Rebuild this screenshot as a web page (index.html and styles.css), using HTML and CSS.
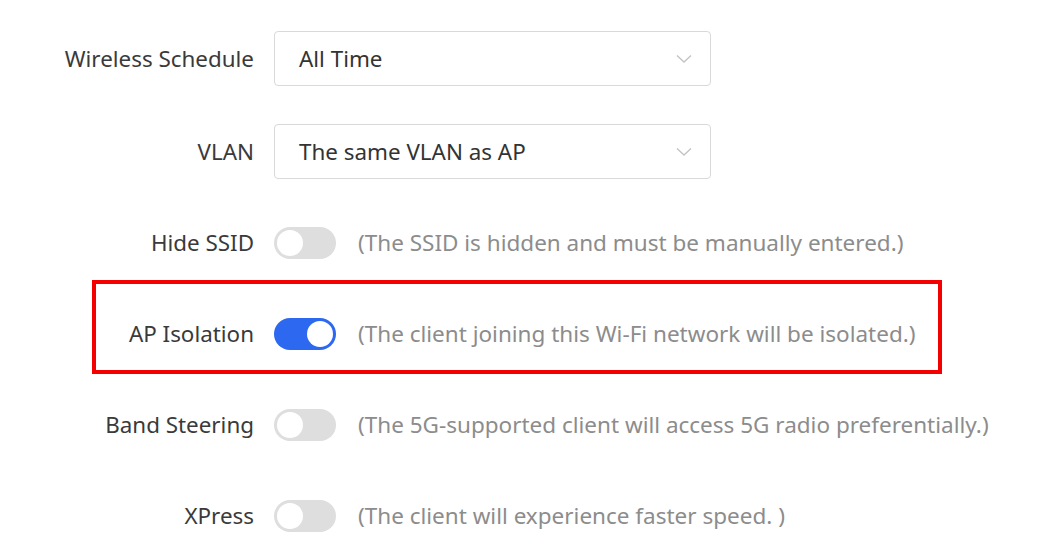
FILE: index.html
```html
<!DOCTYPE html>
<html lang="en">
<head>
    <meta charset="UTF-8">
    <meta name="viewport" content="width=device-width, initial-scale=1.0">
    <title>Wi-Fi Settings</title>
    <link rel="stylesheet" href="styles.css">
</head>
<body>

    <div id="wifi-form">
        <div class="row">
            <label class="label">Wireless Schedule</label>
            <div class="select">
                <span>All Time</span>
                <svg class="arrow" width="16" height="10" viewBox="0 0 16 10"><path d="M1 1.5 L8 8 L15 1.5" fill="none" stroke="#c4c4c4" stroke-width="1.4"/></svg>
            </div>
        </div>

        <div class="row">
            <label class="label">VLAN</label>
            <div class="select">
                <span>The same VLAN as AP</span>
                <svg class="arrow" width="16" height="10" viewBox="0 0 16 10"><path d="M1 1.5 L8 8 L15 1.5" fill="none" stroke="#c4c4c4" stroke-width="1.4"/></svg>
            </div>
        </div>

        <div class="row">
            <label class="label">Hide SSID</label>
            <div class="switch"></div>
            <p class="tip">(The SSID is hidden and must be manually entered.)</p>
        </div>

        <!-- highlighted row -->
        <div class="row marked">
            <label class="label">AP Isolation</label>
            <div class="switch on"></div>
            <p class="tip">(The client joining this Wi-Fi network will be isolated.)</p>
        </div>

        <div class="row">
            <label class="label">Band Steering</label>
            <div class="switch"></div>
            <p class="tip">(The 5G-supported client will access 5G radio preferentially.)</p>
        </div>

        <div class="row">
            <label class="label">XPress</label>
            <div class="switch"></div>
            <p class="tip">(The client will experience faster speed. )</p>
        </div>
    </div>

</body>
</html>
```

FILE: styles.css
```css
body {
    font-family: "Noto Sans", "Open Sans", sans-serif;
    margin: 0;
    padding: 0;
    background: #fff;
    color: #333;
}

#wifi-form {
    padding-top: 31px;
    display: flex;
    flex-direction: column;
    gap: 36px;
}

#wifi-form .row:first-child {
    margin-bottom: 2px;
}

.row {
    display: flex;
    align-items: center;
    height: 55px;
}

.label {
    width: 274px;
    padding-right: 20px;
    box-sizing: border-box;
    text-align: right;
    font-size: 22.4px;
    color: #3a3a3a;
    flex-shrink: 0;
}

.select {
    width: 437px;
    height: 55px;
    box-sizing: border-box;
    border: 1px solid #d9d9d9;
    border-radius: 4px;
    display: flex;
    align-items: center;
    justify-content: space-between;
    padding: 0 18px 0 24px;
    font-size: 22.4px;
    color: #333;
}

.arrow {
    display: block;
}

.switch {
    width: 62px;
    height: 32px;
    border-radius: 16px;
    background: #dedede;
    position: relative;
    flex-shrink: 0;
}

.switch::after {
    content: '';
    position: absolute;
    top: 3px;
    left: 3px;
    width: 26px;
    height: 26px;
    border-radius: 50%;
    background: #fff;
}

.switch.on {
    background: #2d68f0;
}

.switch.on::after {
    left: 33px;
}

.tip {
    margin: 0 0 0 22px;
    font-size: 22.5px;
    color: #8c8c8c;
    white-space: nowrap;
}

.marked {
    position: relative;
}

.marked::after {
    content: '';
    position: absolute;
    left: 92px;
    top: -26px;
    width: 850px;
    height: 94px;
    box-sizing: border-box;
    border: 4px solid #f50000;
}
```
